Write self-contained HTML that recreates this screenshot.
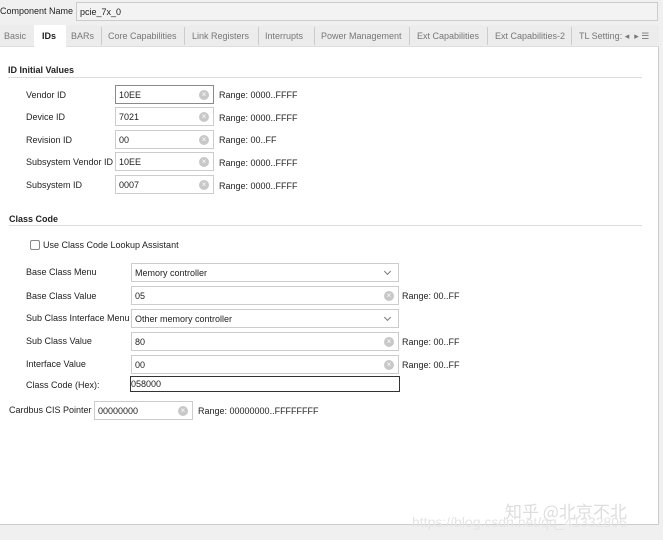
<!DOCTYPE html>
<html><head><meta charset="utf-8"><style>
*{margin:0;padding:0;box-sizing:border-box}
body{width:663px;height:540px;background:#f0f0f0;font-family:"Liberation Sans",Arial,sans-serif;font-size:9px;color:#222;position:relative;overflow:hidden}
.a{position:absolute;white-space:nowrap}
.panel{position:absolute;left:0;top:47px;width:659px;height:478px;background:#fff;border-right:1px solid #ccc;border-bottom:1px solid #ccc}
.tabs{position:absolute;left:0;top:25px;width:659px;height:22px;background:#ececec;border-bottom:1px solid #ddd}
.tab{position:absolute;top:6px;color:#777}
.sep{position:absolute;top:2px;width:1px;height:18px;background:#ccc}
.inp{position:absolute;height:19px;border:1px solid #ccc;background:#fff;padding-left:3px;padding-top:1px;line-height:17px}
.x{position:absolute;right:4px;top:4px;width:10px;height:10px;border-radius:50%;background:#c8c8c8;color:#fff;font-size:8px;line-height:10px;text-align:center}
.b{font-weight:bold}
.line{position:absolute;height:1px;background:#ddd}
.dd{position:absolute;right:8px;top:5px;width:5px;height:5px;border-right:1px solid #777;border-bottom:1px solid #777;transform:rotate(45deg)}
</style></head><body>
<div class="a" style="left:0;top:6px">Component Name</div>
<div class="inp" style="left:76px;top:2px;width:582px;height:19px;background:#f3f3f3;border-color:#ccc">pcie_7x_0</div>
<div class="tabs">
<div style="position:absolute;left:34px;top:0;width:32px;height:22px;background:#fff"></div>
<div class="tab" style="left:4px">Basic</div>
<div class="tab b" style="left:42px;color:#222">IDs</div>
<div class="tab" style="left:71px">BARs</div>
<div class="sep" style="left:101px"></div>
<div class="tab" style="left:108px">Core Capabilities</div>
<div class="sep" style="left:184px"></div>
<div class="tab" style="left:192px">Link Registers</div>
<div class="sep" style="left:258px"></div>
<div class="tab" style="left:265px">Interrupts</div>
<div class="sep" style="left:314px"></div>
<div class="tab" style="left:321px">Power Management</div>
<div class="sep" style="left:409px"></div>
<div class="tab" style="left:417px">Ext Capabilities</div>
<div class="sep" style="left:487px"></div>
<div class="tab" style="left:495px">Ext Capabilities-2</div>
<div class="sep" style="left:571px"></div>
<div class="tab" style="left:579px">TL Setting: ◂ &nbsp;▸ ☰</div>
</div>
<div class="panel"></div>
<div class="a b" style="left:8px;top:65px">ID Initial Values</div>
<div class="line" style="left:8px;top:77px;width:634px"></div>

<div class="a" style="left:26px;top:90px">Vendor ID</div>
<div class="inp" style="left:115px;top:85px;width:99px;border-color:#6a8fc0">10EE<div class="x">×</div></div>
<div class="a" style="left:219px;top:90px">Range: 0000..FFFF</div>
<div class="a" style="left:26px;top:112px">Device ID</div>
<div class="inp" style="left:115px;top:107px;width:99px">7021<div class="x">×</div></div>
<div class="a" style="left:219px;top:113px">Range: 0000..FFFF</div>
<div class="a" style="left:26px;top:135px">Revision ID</div>
<div class="inp" style="left:115px;top:130px;width:99px">00<div class="x">×</div></div>
<div class="a" style="left:219px;top:135px">Range: 00..FF</div>
<div class="a" style="left:26px;top:157px">Subsystem Vendor ID</div>
<div class="inp" style="left:115px;top:152px;width:99px">10EE<div class="x">×</div></div>
<div class="a" style="left:219px;top:158px">Range: 0000..FFFF</div>
<div class="a" style="left:26px;top:180px">Subsystem ID</div>
<div class="inp" style="left:115px;top:175px;width:99px">0007<div class="x">×</div></div>
<div class="a" style="left:219px;top:181px">Range: 0000..FFFF</div>

<div class="a b" style="left:9px;top:214px">Class Code</div>
<div class="line" style="left:9px;top:225px;width:633px"></div>
<div style="position:absolute;left:30px;top:240px;width:10px;height:10px;border:1px solid #888;border-radius:2px;background:#fff"></div>
<div class="a" style="left:43px;top:240px">Use Class Code Lookup Assistant</div>

<div class="a" style="left:26px;top:267px">Base Class Menu</div>
<div class="inp" style="left:131px;top:263px;width:268px">Memory controller<div class="dd"></div></div>
<div class="a" style="left:26px;top:291px">Base Class Value</div>
<div class="inp" style="left:131px;top:286px;width:268px">05<div class="x">×</div></div>
<div class="a" style="left:402px;top:291px">Range: 00..FF</div>
<div class="a" style="left:26px;top:313px">Sub Class Interface Menu</div>
<div class="inp" style="left:131px;top:309px;width:268px">Other memory controller<div class="dd"></div></div>
<div class="a" style="left:26px;top:336px">Sub Class Value</div>
<div class="inp" style="left:131px;top:332px;width:268px">80<div class="x">×</div></div>
<div class="a" style="left:402px;top:337px">Range: 00..FF</div>
<div class="a" style="left:26px;top:359px">Interface Value</div>
<div class="inp" style="left:131px;top:355px;width:268px">00<div class="x">×</div></div>
<div class="a" style="left:402px;top:360px">Range: 00..FF</div>
<div class="a" style="left:26px;top:380px">Class Code (Hex):</div>
<div class="inp" style="left:130px;top:376px;width:270px;height:16px;border-color:#333;line-height:14px;padding:0">058000</div>

<div class="a" style="left:9px;top:405px">Cardbus CIS Pointer</div>
<div class="inp" style="left:94px;top:401px;width:99px">00000000<div class="x">×</div></div>
<div class="a" style="left:198px;top:406px">Range: 00000000..FFFFFFFF</div>

<div class="a" style="left:505px;top:498px;font-size:17px;color:#ddd;font-family:'Noto Sans CJK SC',sans-serif">知乎 @北京不北</div>
<div class="a" style="left:412px;top:514px;font-size:14px;color:#e4e4e4">https://blog.csdn.net/qq_41332806</div>
</body></html>
